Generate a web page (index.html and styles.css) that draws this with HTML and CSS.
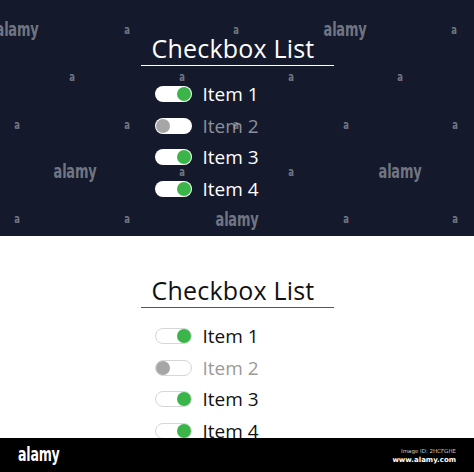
FILE: index.html
```html
<!DOCTYPE html>
<html lang="en">
<head>
<meta charset="utf-8">
<title>Checkbox List</title>
<link rel="stylesheet" href="styles.css">
</head>
<body>
<section class="panel panel-dark">
  <div class="card">
    <div class="title">Checkbox List</div>
    <div class="rule"></div>
    <ul class="list">
      <li class="row on"><span class="toggle"><span class="knob"></span></span><span class="label">Item 1</span></li>
      <li class="row off"><span class="toggle"><span class="knob"></span></span><span class="label">Item 2</span></li>
      <li class="row on"><span class="toggle"><span class="knob"></span></span><span class="label">Item 3</span></li>
      <li class="row on"><span class="toggle"><span class="knob"></span></span><span class="label">Item 4</span></li>
    </ul>
  </div>
  <div class="wms" aria-hidden="true">
    <span class="wm big">alamy</span><span class="wm">a</span><span class="wm">a</span><span class="wm big">alamy</span><span class="wm">a</span>
    <span class="wm">a</span><span class="wm">a</span><span class="wm">a</span><span class="wm">a</span>
    <span class="wm">a</span><span class="wm">a</span><span class="wm">a</span><span class="wm">a</span><span class="wm">a</span>
    <span class="wm big">alamy</span><span class="wm">a</span><span class="wm">a</span><span class="wm big">alamy</span>
    <span class="wm">a</span><span class="wm">a</span><span class="wm big">alamy</span><span class="wm">a</span><span class="wm">a</span>
  </div>
</section>
<section class="panel panel-light">
  <div class="card">
    <div class="title">Checkbox List</div>
    <div class="rule"></div>
    <ul class="list">
      <li class="row on"><span class="toggle"><span class="knob"></span></span><span class="label">Item 1</span></li>
      <li class="row off"><span class="toggle"><span class="knob"></span></span><span class="label">Item 2</span></li>
      <li class="row on"><span class="toggle"><span class="knob"></span></span><span class="label">Item 3</span></li>
      <li class="row on"><span class="toggle"><span class="knob"></span></span><span class="label">Item 4</span></li>
    </ul>
  </div>
</section>
<footer class="footer">
  <span class="logo">alamy</span>
  <div class="meta">
    <div class="meta-id">Image ID: 2HCFGHE</div>
    <div class="meta-url">www.alamy.com</div>
  </div>
</footer>
</body>
</html>
```
FILE: styles.css
```css
html, body {
  margin: 0;
  padding: 0;
}
body {
  width: 474px;
  height: 472px;
  overflow: hidden;
  font-family: "Open Sans", "Noto Sans", sans-serif;
  background: #fff;
}
.panel {
  position: relative;
  overflow: hidden;
  box-sizing: border-box;
}
.panel-dark {
  height: 236px;
  background: #141a2c;
  padding-top: 33px;
  color: #fff;
}
.panel-light {
  height: 202px;
  background: #fff;
  padding-top: 39px;
  color: #111;
}
.card {
  width: 193px;
  margin: 0 auto;
  position: relative;
  z-index: 1;
}
.title {
  font-size: 25px;
  line-height: 30px;
  text-align: center;
  padding-right: 8px;
  letter-spacing: 0.2px;
}
.rule {
  height: 1px;
  margin-top: 2px;
  background: #fff;
}
.panel-light .rule {
  background: #555;
}
.list {
  list-style: none;
  margin: 12px 0 0 0;
  padding: 0 0 0 14px;
}
.row {
  display: flex;
  align-items: center;
  height: 31.7px;
}
.toggle {
  width: 37px;
  height: 16px;
  border-radius: 8px;
  background: #fff;
  box-sizing: border-box;
  display: flex;
  align-items: center;
  justify-content: flex-end;
  padding: 0 1px;
  flex-shrink: 0;
}
.panel-light .toggle {
  border: 1px solid #d6d6d6;
  padding: 0;
}
.knob {
  width: 14px;
  height: 14px;
  border-radius: 50%;
  background: #3bb54a;
}
.off .toggle {
  justify-content: flex-start;
}
.off .knob {
  background: #a6a6a6;
}
.label {
  margin-left: 11px;
  font-size: 19px;
  line-height: 32px;
}
.panel-dark .off .label {
  color: #8c8f98;
}
.panel-light .off .label {
  color: #9a9a9a;
}

/* watermark overlay */
.wms {
  position: absolute;
  inset: 0;
  z-index: 2;
  pointer-events: none;
}
.wm {
  position: absolute;
  transform: translate(-50%, -50%) scaleX(0.72);
  font-family: "DejaVu Sans Condensed", "Liberation Sans", sans-serif;
  font-weight: 700;
  font-size: 13px;
  line-height: 1;
  color: rgba(175, 178, 188, 0.62);
}
.wm.big {
  font-size: 20px;
  letter-spacing: -0.3px;
}
.wm:nth-child(1) { left: 17px; top: 29px; }
.wm:nth-child(2) { left: 127px; top: 29px; }
.wm:nth-child(3) { left: 236px; top: 29px; }
.wm:nth-child(4) { left: 345px; top: 29px; }
.wm:nth-child(5) { left: 454px; top: 29px; }
.wm:nth-child(6) { left: 72px; top: 76px; }
.wm:nth-child(7) { left: 182px; top: 76px; }
.wm:nth-child(8) { left: 291px; top: 76px; }
.wm:nth-child(9) { left: 400px; top: 76px; }
.wm:nth-child(10) { left: 17px; top: 124px; }
.wm:nth-child(11) { left: 127px; top: 124px; }
.wm:nth-child(12) { left: 236px; top: 124px; }
.wm:nth-child(13) { left: 346px; top: 124px; }
.wm:nth-child(14) { left: 455px; top: 124px; }
.wm:nth-child(15) { left: 75px; top: 171px; }
.wm:nth-child(16) { left: 182px; top: 171px; }
.wm:nth-child(17) { left: 291px; top: 171px; }
.wm:nth-child(18) { left: 400px; top: 171px; }
.wm:nth-child(19) { left: 17px; top: 218px; }
.wm:nth-child(20) { left: 127px; top: 218px; }
.wm:nth-child(21) { left: 237px; top: 219px; }
.wm:nth-child(22) { left: 346px; top: 218px; }
.wm:nth-child(23) { left: 455px; top: 218px; }

/* footer */
.footer {
  height: 34px;
  background: #000;
  display: flex;
  align-items: center;
  justify-content: space-between;
  padding: 0 18px;
  box-sizing: border-box;
}
.logo {
  font-family: "DejaVu Sans Condensed", "Liberation Sans", sans-serif;
  font-weight: 700;
  font-size: 20px;
  letter-spacing: -0.3px;
  color: #fff;
  line-height: 1;
  margin-top: -2px;
  transform: scaleX(0.7);
  transform-origin: left center;
}
.meta {
  text-align: right;
  font-family: "DejaVu Sans", "Liberation Sans", sans-serif;
  color: #fff;
  margin-top: 2px;
}
.meta-id {
  font-size: 5.5px;
  line-height: 8px;
  color: #ccc;
}
.meta-url {
  font-size: 7px;
  line-height: 10px;
  font-weight: 700;
}
```
